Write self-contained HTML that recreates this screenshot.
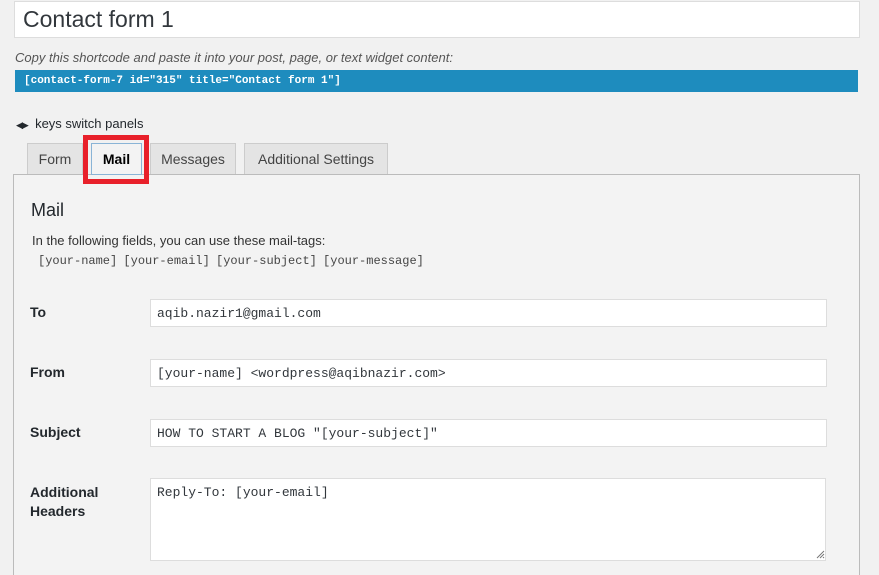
<!DOCTYPE html>
<html><head><meta charset="utf-8"><style>
*{box-sizing:border-box;margin:0;padding:0}
html,body{width:879px;height:575px;overflow:hidden}
body{background:#f1f1f1;font-family:"Liberation Sans",sans-serif;color:#23282d;position:relative}
.abs{position:absolute}
.mono{font-family:"Liberation Mono",monospace}
.title{left:14px;top:1px;width:846px;height:37px;background:#fff;border:1px solid #ddd;font-size:23px;padding:4px 8px;color:#32373c}
.hint{left:15px;top:50px;font-size:13px;font-style:italic;color:#555}
.sc{left:15px;top:70px;width:843px;height:22px;background:#1e8cbe;color:#fff;font-size:11px;font-weight:bold;padding:0 9px;line-height:22px}
.keys{left:16px;top:116px;font-size:13px;color:#23282d}
.tab{top:143px;height:31px;background:#e4e4e4;border:1px solid #ccc;border-bottom:none;font-size:14px;color:#444;padding:7px 0 0;text-align:center}
.panel{left:13px;top:174px;width:847px;height:410px;background:#f3f3f3;border:1px solid #bbb}
.lbl{left:30px;font-size:14px;font-weight:bold;color:#23282d;line-height:19px}
.inp{left:150px;width:677px;height:28px;background:#fff;border:1px solid #ddd;font-size:13px;padding:6px 6px;color:#32373c}
</style></head><body>
<div class="abs title">Contact form 1</div>
<div class="abs hint">Copy this shortcode and paste it into your post, page, or text widget content:</div>
<div class="abs sc mono">[contact-form-7 id="315" title="Contact form 1"]</div>
<div class="abs keys"><span style="font-size:9px;letter-spacing:-1px">◀▶</span>&nbsp; keys switch panels</div>
<div class="abs panel"></div>
<div class="abs tab" style="left:27px;width:56px">Form</div>
<div class="abs tab" style="left:150px;width:86px">Messages</div>
<div class="abs tab" style="left:244px;width:144px">Additional Settings</div>
<div class="abs tab" style="left:91px;width:51px;height:32px;background:#f3f3f3;border:1px solid #8ab4d6;color:#000;font-weight:bold">Mail</div>
<div class="abs" style="left:83px;top:135px;width:66px;height:49px;border:5px solid #e8202a"></div>
<div class="abs" style="left:31px;top:200px;font-size:18px;color:#23282d">Mail</div>
<div class="abs" style="left:32px;top:233px;font-size:13px;color:#333">In the following fields, you can use these mail-tags:</div>
<div class="abs mono" style="left:38px;top:254px;font-size:12px;color:#444;word-spacing:-1px">[your-name] [your-email] [your-subject] [your-message]</div>
<div class="abs lbl" style="top:303px">To</div>
<div class="abs inp mono" style="top:299px">aqib.nazir1@gmail.com</div>
<div class="abs lbl" style="top:363px">From</div>
<div class="abs inp mono" style="top:359px">[your-name] &lt;wordpress@aqibnazir.com&gt;</div>
<div class="abs lbl" style="top:423px">Subject</div>
<div class="abs inp mono" style="top:419px">HOW TO START A BLOG "[your-subject]"</div>
<div class="abs lbl" style="top:483px">Additional<br>Headers</div>
<div class="abs inp mono" style="top:478px;height:83px;width:676px">Reply-To: [your-email]</div>
<svg class="abs" style="left:816px;top:550px" width="9" height="9"><path d="M1 8L8 1M4 8L8 4M7 8L8 7" stroke="#777" stroke-width="1"/></svg>
</body></html>
